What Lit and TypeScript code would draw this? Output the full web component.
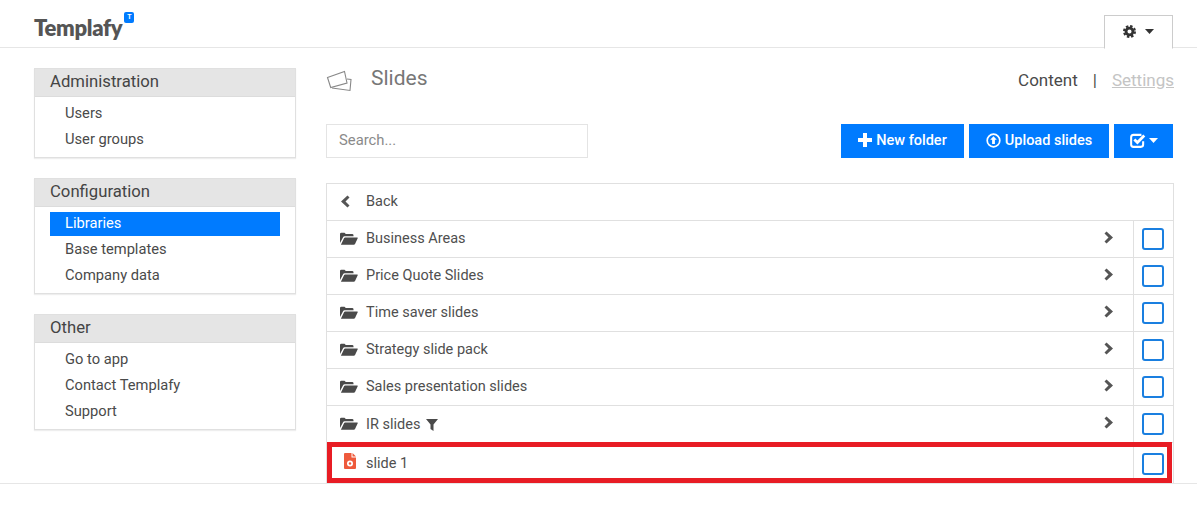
import { LitElement, html, css } from 'lit';
import { customElement } from 'lit/decorators.js';

const chevron = (d: string) => html`<svg width="12" height="14" viewBox="0 0 12 14"><path d=${d} fill="#555"></path></svg>`;
const chevRight = 'M3.500 0.500L10 6.500 3.500 12.500 1.500 10.500 5.500 6.500 1.500 2.500z';
const chevLeft = 'M7.500 0.500L1 6.500 7.500 12.500 9.500 10.500 5.500 6.500 9.500 2.500z';

const folder = html`<svg class="row-icon" width="18" height="13" viewBox="0 0 20 14"><path d="M0 12V2q0-1.500 1.500-1.500h3.500l1.500 1.500h7q1.500 0 1.500 1.500v1H5q-1 0-1.600 1z" fill="#4a4a4a"></path><path d="M1 14l3.600-7.500q.3-.5 1-.5h13.600q.8 0 .5.800l-3 6.300q-.4.900-1.400.900z" fill="#4a4a4a"></path></svg>`;

const gear = html`<svg width="13" height="13" viewBox="0 0 14 14"><circle cx="7" cy="7" r="3.700" fill="none" stroke="#333" stroke-width="3"></circle><circle cx="7" cy="7" r="5.800" fill="none" stroke="#333" stroke-width="2.400" stroke-dasharray="2.600 1.950"></circle></svg>`;

const caret = (color: string) => html`<svg width="9" height="5" viewBox="0 0 9 5"><path d="M0 0h9L4.500 5z" fill=${color}></path></svg>`;

@customElement('app-root')
export class AppRoot extends LitElement {
  static styles = css`
    :host {
      display: block;
      position: relative;
      height: 511px;
      overflow: hidden;
      background: #fff;
      color: #4a4a4a;
      font-family: Roboto, 'Liberation Sans', sans-serif;
      font-size: 14px;
    }

    .topbar {
      display: flex;
      justify-content: space-between;
      height: 47px;
      padding: 0 24px 0 34px;
      border-bottom: 1px solid #e6e6e6;
    }

    .logo {
      display: flex;
      align-items: flex-start;
      padding-top: 14px;
      font-family: Lato, sans-serif;
      font-size: 22px;
      font-weight: 800;
      line-height: 28px;
      letter-spacing: -0.3px;
      color: #555;
    }

    .logo-badge {
      width: 10px;
      height: 11px;
      margin: -2px 0 0 2px;
      border-radius: 2px;
      background: #007bff;
      color: #fff;
      font-family: Roboto, sans-serif;
      font-size: 7px;
      font-weight: 700;
      line-height: 11px;
      letter-spacing: 0;
      text-align: center;
    }

    .gear-tab {
      display: flex;
      align-items: center;
      justify-content: center;
      gap: 9px;
      box-sizing: border-box;
      width: 69px;
      height: 34px;
      margin-top: 15px;
      padding: 0 1px 2px 0;
      border: 1px solid #ccc;
      border-bottom: 1px solid #fff;
      background: #fff;
    }

    .page {
      display: flex;
      gap: 30px;
      padding: 20px 23px 0 34px;
    }

    .sidebar {
      display: flex;
      flex-direction: column;
      gap: 20px;
      flex: none;
      width: 262px;
    }

    .panel {
      border: 1px solid #e0e0e0;
      box-shadow: 0 1px 1px #eee;
      padding-bottom: 3px;
    }

    .panel h3 {
      margin: 0 0 5px;
      height: 27px;
      padding-left: 15px;
      border-bottom: 1px solid #dcdcdc;
      background: #e5e5e5;
      font-size: 16.700px;
      font-weight: 400;
      line-height: 25px;
      color: #444;
    }

    .panel a {
      display: block;
      height: 24px;
      margin: 0 15px 2px;
      padding-left: 15px;
      font-size: 14.700px;
      line-height: 22px;
      color: #4a4a4a;
    }

    .panel a.active {
      background: #007bff;
      color: #fff;
    }

    main {
      flex: 1;
      min-width: 0;
    }

    .title-row {
      display: flex;
      align-items: center;
      height: 22px;
    }

    .title-row svg {
      margin-top: 4px;
    }

    .title-row h1 {
      margin: -2px 0 0 19px;
      font-size: 21px;
      font-weight: 400;
      color: #777;
    }

    .tabs {
      display: flex;
      gap: 15px;
      margin-left: auto;
      font-size: 17px;
      padding-top: 1px;
    }

    .tabs .off {
      color: #c4c4c4;
      text-decoration: underline;
    }

    .toolbar {
      display: flex;
      align-items: stretch;
      gap: 5px;
      height: 34px;
      margin: 34px 1px 25px 0;
    }

    .search {
      box-sizing: border-box;
      width: 262px;
      margin-right: auto;
      padding-left: 12px;
      border: 1px solid #e4e4e4;
      font-size: 14.800px;
      line-height: 30px;
      color: #8a8a8a;
    }

    .btn {
      display: flex;
      align-items: center;
      justify-content: center;
      gap: 4px;
      box-sizing: border-box;
      padding-bottom: 2px;
      background: #007bff;
      color: #fff;
      font-size: 14.500px;
      font-weight: 500;
    }

    .btn-new {
      width: 123px;
    }

    .btn-upload {
      width: 140px;
    }

    .btn-check {
      width: 59px;
      gap: 3px;
    }

    .list {
      border: 1px solid #e0e0e0;
      border-bottom: none;
    }

    .row {
      display: flex;
      height: 37px;
      box-sizing: border-box;
      border-bottom: 1px solid #e0e0e0;
    }

    .row.last {
      height: 41px;
      border-bottom: none;
    }

    .cell {
      display: flex;
      align-items: center;
      flex: 1;
      min-width: 0;
      padding: 0 18px 1px 13px;
      font-size: 14.500px;
      color: #4f4f4f;
    }

    .row.filtered .cell {
      padding: 1px 18px 0 13px;
    }

    .chev {
      margin: -2px 0 0 auto;
      display: flex;
    }

    .row.filtered .chev {
      margin-top: -4px;
    }

    .row-icon {
      flex: none;
      margin: 0 8px 0 0;
    }

    .row.filtered .row-icon {
      margin-top: -2px;
    }

    .file-icon {
      flex: none;
      margin: -4px 10px 0 4px;
    }

    .back-icon {
      display: flex;
      flex: none;
      width: 26px;
    }

    .cell .filter {
      margin-left: 6px;
    }

    .check-cell {
      display: flex;
      align-items: center;
      justify-content: center;
      flex: none;
      width: 40px;
      padding-right: 2px;
      box-sizing: border-box;
      border-left: 1px solid #e0e0e0;
    }

    .check {
      width: 18px;
      height: 18px;
      border: 2px solid #1a7fe0;
      border-radius: 3px;
    }

    .footer-line {
      position: absolute;
      left: 0;
      right: 0;
      top: 483px;
      border-top: 1px solid #e6e6e6;
    }

    .highlight {
      position: absolute;
      left: 327px;
      top: 442px;
      width: 835px;
      height: 31px;
      border: 5px solid #e81c24;
    }
  `;

  renderRow(name: string, filter = false) {
    return html`
      <div class="row ${filter ? 'filtered' : ''}">
        <div class="cell">
          ${folder}${name}
          ${filter ? html`<svg class="filter" width="12" height="12" viewBox="0 0 12 12"><path d="M0 0h12L7.500 5.500V12l-3-2V5.500z" fill="#4a4a4a"></path></svg>` : ''}
          <span class="chev">${chevron(chevRight)}</span>
        </div>
        <div class="check-cell"><div class="check"></div></div>
      </div>
    `;
  }

  render() {
    return html`
      <div class="topbar">
        <div class="logo">Templafy<span class="logo-badge">T</span></div>
        <div class="gear-tab">${gear}${caret('#333')}</div>
      </div>
      <div class="page">
        <div class="sidebar">
          <div class="panel">
            <h3>Administration</h3>
            <a>Users</a>
            <a>User groups</a>
          </div>
          <div class="panel">
            <h3>Configuration</h3>
            <a class="active">Libraries</a>
            <a>Base templates</a>
            <a>Company data</a>
          </div>
          <div class="panel">
            <h3>Other</h3>
            <a>Go to app</a>
            <a>Contact Templafy</a>
            <a>Support</a>
          </div>
        </div>
        <main>
          <div class="title-row">
            <svg width="26" height="22" viewBox="0 0 26 22" fill="none" stroke="#888" stroke-width="1.100"><path d="M1.500 7.500L18.500 1.500 21 13 4.700 17.500z"></path><path d="M21 9l4 .5-1 11L6 18"></path></svg>
            <h1>Slides</h1>
            <div class="tabs"><span>Content</span><span>|</span><span class="off">Settings</span></div>
          </div>
          <div class="toolbar">
            <div class="search">Search...</div>
            <div class="btn btn-new">
              <svg width="14" height="14" viewBox="0 0 14 14"><path d="M5 0h4v5h5v4H9v5H5V9H0V5h5z" fill="#fff"></path></svg>
              New folder
            </div>
            <div class="btn btn-upload">
              <svg width="15" height="15" viewBox="0 0 15 15"><circle cx="7.500" cy="7.500" r="6.300" fill="none" stroke="#fff" stroke-width="1.700"></circle><path d="M7.500 3.200l3.300 3.500H8.900V11H6.100V6.700H4.200z" fill="#fff"></path></svg>
              Upload slides
            </div>
            <div class="btn btn-check">
              <svg width="16" height="16" viewBox="0 0 14 14" fill="none" stroke="#fff"><path d="M11.500 8v3q0 2-2 2H3q-2 0-2-2V4.500q0-2 2-2h7" stroke-width="1.800"></path><path d="M3.800 6.500l2.700 2.700L12.500 3" stroke-width="2.400"></path></svg>
              ${caret('#fff')}
            </div>
          </div>
          <div class="list">
            <div class="row">
              <div class="cell"><span class="back-icon">${chevron(chevLeft)}</span>Back</div>
            </div>
            ${this.renderRow('Business Areas')}
            ${this.renderRow('Price Quote Slides')}
            ${this.renderRow('Time saver slides')}
            ${this.renderRow('Strategy slide pack')}
            ${this.renderRow('Sales presentation slides')}
            ${this.renderRow('IR slides', true)}
            <div class="row last">
              <div class="cell">
                <svg class="file-icon" width="12" height="16" viewBox="0 0 12 16"><path d="M0 1q0-1 1-1h6.500v4.500H12V15q0 1-1 1H1q-1 0-1-1z" fill="#ee5a3c"></path><path d="M8.500 0L12 3.500H8.500z" fill="#ee5a3c"></path><circle cx="6" cy="10.500" r="3" fill="#fff"></circle><circle cx="6" cy="10.500" r="1.200" fill="#ee5a3c"></circle></svg>
                slide 1
              </div>
              <div class="check-cell"><div class="check"></div></div>
            </div>
          </div>
        </main>
      </div>
      <div class="footer-line"></div>
      <div class="highlight"></div>
    `;
  }
}
